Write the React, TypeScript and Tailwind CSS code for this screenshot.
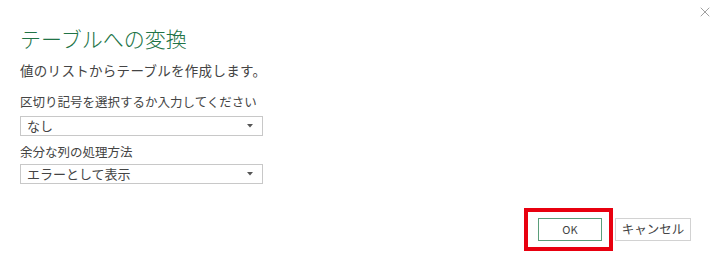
import { X } from "lucide-react"

const font = { fontFamily: '"Noto Sans CJK JP", "Noto Sans", sans-serif' }

function Select({ value }: { value: string }) {
  return (
    <div className="w-[243px] h-[20px] border border-[#c8c8c8] bg-white flex items-center justify-between pl-[6px] pr-[9px]">
      <span className="text-[13px] leading-[16px] text-[#444444]">{value}</span>
      <svg width="6" height="4" viewBox="0 0 6 4">
        <path d="M0 0 L6 0 L3 3.5 Z" fill="#555555" />
      </svg>
    </div>
  )
}

export default function App() {
  return (
    <div className="relative w-[720px] h-[272px] bg-white overflow-hidden" style={font}>
      <button className="absolute right-[7px] top-[4px] text-[#888888]" aria-label="閉じる">
        <X className="w-[16px] h-[16px]" strokeWidth={1.2} />
      </button>

      <div className="flex flex-col pl-[20px] pt-[24px]">
        <h1 className="text-[21px] leading-[28px] font-light text-[#217346]">テーブルへの変換</h1>
        <p className="mt-[9px] text-[13.5px] leading-[18px] tracking-[0.3px] text-[#444444]">値のリストからテーブルを作成します。</p>

        <label className="mt-[15px] text-[12.5px] leading-[16px] text-[#444444]">区切り記号を選択するか入力してください</label>
        <div className="mt-[6px]">
          <Select value="なし" />
        </div>

        <label className="mt-[8px] text-[12.5px] leading-[16px] text-[#444444]">余分な列の処理方法</label>
        <div className="mt-[4px]">
          <Select value="エラーとして表示" />
        </div>
      </div>

      <div className="flex justify-end items-center gap-[2px] pr-[29px] mt-[24px]">
        <div className="border-[4px] border-[#e8000f] pl-[10px] pr-[7px] py-[6px]">
          <button className="w-[64px] h-[23px] border border-[#5a9e7a] bg-white text-[11px] text-[#444444] flex items-center justify-center">
            OK
          </button>
        </div>
        <button className="w-[76px] h-[23px] border border-[#d2d2d2] bg-white text-[12.5px] text-[#444444] flex items-center justify-center">
          キャンセル
        </button>
      </div>
    </div>
  )
}
